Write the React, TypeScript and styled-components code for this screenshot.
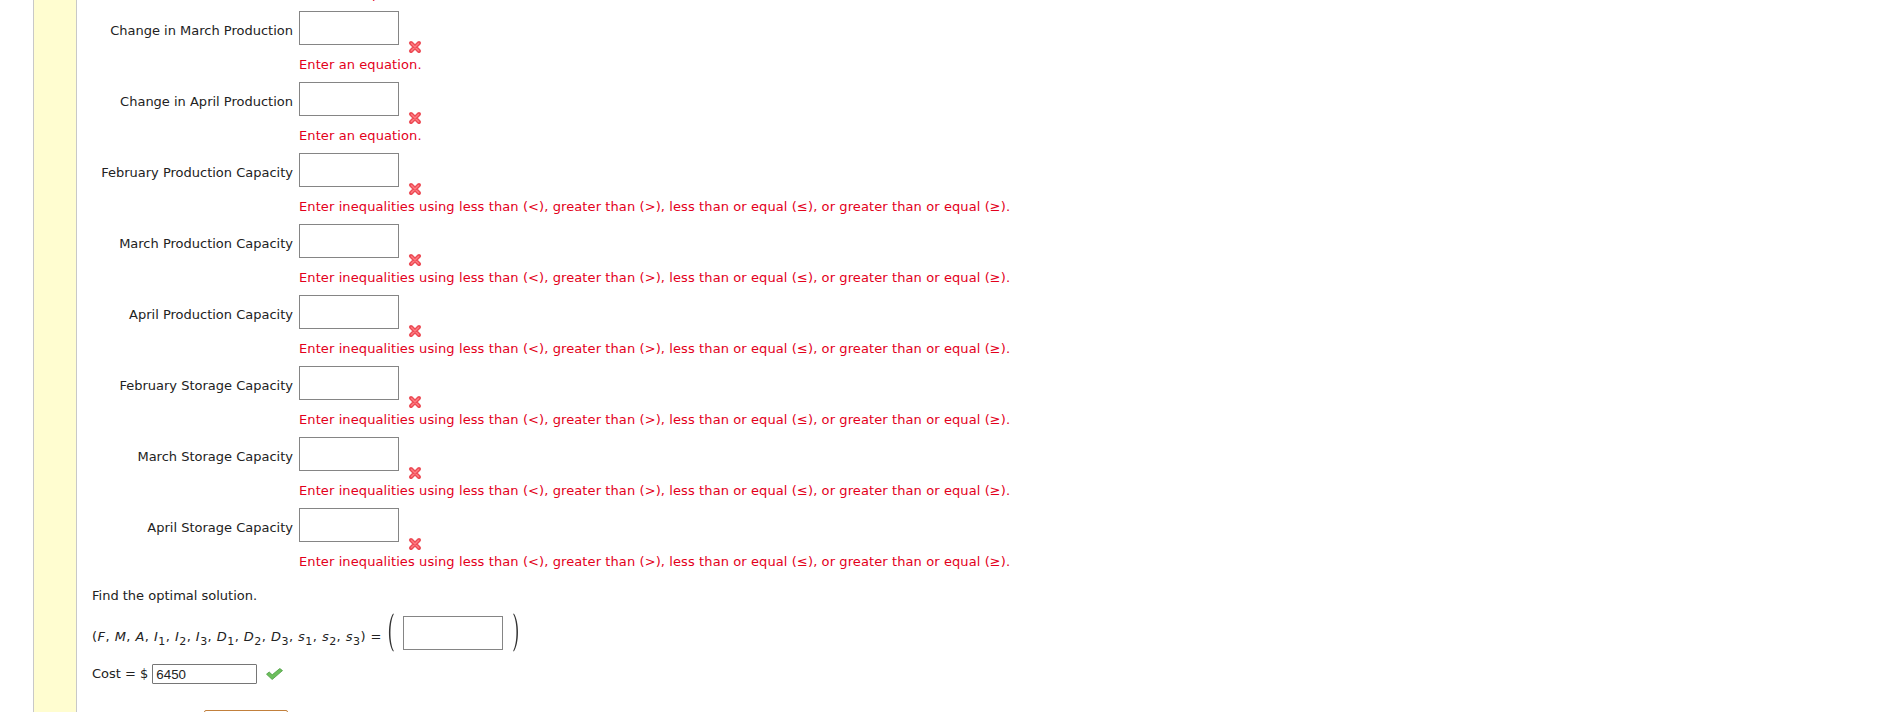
import React from "react";
import styled, { createGlobalStyle } from "styled-components";

const EQ = "Enter an equation.";
const INEQ =
  "Enter inequalities using less than (<), greater than (>), less than or equal (≤), or greater than or equal (≥).";

const rows = [
  { label: "Change in February Production", msg: EQ },
  { label: "Change in March Production", msg: EQ },
  { label: "Change in April Production", msg: EQ },
  { label: "February Production Capacity", msg: INEQ },
  { label: "March Production Capacity", msg: INEQ },
  { label: "April Production Capacity", msg: INEQ },
  { label: "February Storage Capacity", msg: INEQ },
  { label: "March Storage Capacity", msg: INEQ },
  { label: "April Storage Capacity", msg: INEQ },
];

const vars: [string, string?][] = [
  ["F"], ["M"], ["A"], ["I", "1"], ["I", "2"], ["I", "3"],
  ["D", "1"], ["D", "2"], ["D", "3"], ["s", "1"], ["s", "2"], ["s", "3"],
];

const GlobalStyle = createGlobalStyle`
  html, body {
    margin: 0;
    padding: 0;
    overflow: hidden;
    background: #fff;
  }
  body {
    font-family: "DejaVu Sans", Verdana, sans-serif;
    font-size: 13px;
    color: #222;
  }
`;

const Cross = () => (
  <svg width="14" height="14" viewBox="0 0 14 14">
    <path d="M3 3 L11 11 M11 3 L3 11" stroke="#ec4b55" strokeWidth="4" strokeLinecap="round" />
    <path d="M3.5 3.5 L10.5 10.5 M10.5 3.5 L3.5 10.5" stroke="#ff7c82" strokeWidth="1.4" strokeLinecap="round" />
  </svg>
);

const Check = () => (
  <svg width="17" height="12" viewBox="0 0 17 12">
    <path d="M0.5 6.2 L3.2 4 L6.2 6.8 L13.8 0.5 L16.5 2.6 L6.2 11.5 Z" fill="#6cbf5c" stroke="#4c9c43" strokeWidth="0.8" strokeLinejoin="round" />
  </svg>
);

// stretchy delimiters round the answer box
const Paren = ({ side }: { side: "left" | "right" }) => (
  <svg width="8" height="39" viewBox="0 0 8 39">
    {side === "left" ? (
      <path d="M7.2 0.5 C1.6 8 1.6 31 7.2 38.5 L7.8 38 C3.4 30 3.4 9 7.8 1 Z" fill="#333" />
    ) : (
      <path d="M0.8 0.5 C6.4 8 6.4 31 0.8 38.5 L0.2 38 C4.6 30 4.6 9 0.2 1 Z" fill="#333" />
    )}
  </svg>
);

const App = () => (
  <>
    <GlobalStyle />
    <Page>
      <Gutter />
      <Strip />
      <Content>
        {rows.map((r) => (
          <Row key={r.label}>
            <Label>{r.label}</Label>
            <Field>
              <InputLine>
                <AnswerBox />
                <Mark $top={29}>
                  <Cross />
                </Mark>
              </InputLine>
              <ErrorText>{r.msg}</ErrorText>
            </Field>
          </Row>
        ))}

        <Prompt>Find the optimal solution.</Prompt>

        <Formula>
          <MathText>
            (
            {vars.map(([v, s], i) => (
              <React.Fragment key={i}>
                <Var>{v}</Var>
                {s && <Sub>{s}</Sub>}
                {i < vars.length - 1 ? ", " : ""}
              </React.Fragment>
            ))}
            ) =
          </MathText>
          <ParenWrap $gap={4}>
            <Paren side="left" />
          </ParenWrap>
          <AnswerBox $gapLeft={9} />
          <ParenWrap $gap={10}>
            <Paren side="right" />
          </ParenWrap>
        </Formula>

        <CostLine>
          <span>Cost = $</span>
          <CostInput defaultValue="6450" />
          <Mark $top={0}>
            <Check />
          </Mark>
        </CostLine>

        <SubmitButton />
      </Content>
    </Page>
  </>
);

const Page = styled.div`
  display: flex;
  min-height: 100vh;
  width: 100%;
`;

const Gutter = styled.div`
  width: 33px;
  flex: none;
`;

const Strip = styled.div`
  width: 42px;
  flex: none;
  background: #fffdd0;
  border-left: 1px solid #c8c8c8;
  border-right: 1px solid #c8c8c8;
`;

const Content = styled.div`
  flex: 1;
  margin-top: -60px;
  padding-left: 15px;
  display: flex;
  flex-direction: column;
  align-items: flex-start;
`;

const Row = styled.div`
  display: flex;
  margin-bottom: 9px;
`;

const Label = styled.div`
  width: 201px;
  text-align: right;
  padding-top: 12px;
  line-height: 16px;
  margin-right: 6px;
  white-space: nowrap;
`;

const Field = styled.div`
  display: flex;
  flex-direction: column;
`;

const InputLine = styled.div`
  display: flex;
  align-items: flex-start;
  height: 46px;
`;

const AnswerBox = styled.div<{ $gapLeft?: number }>`
  width: 100px;
  height: 34px;
  box-sizing: border-box;
  border: 1px solid #858585;
  background: #fff;
  margin-left: ${(p) => p.$gapLeft ?? 0}px;
  flex: none;
`;

const Mark = styled.span<{ $top: number }>`
  display: inline-flex;
  margin-left: 9px;
  margin-top: ${(p) => p.$top}px;
`;

const ErrorText = styled.div`
  color: #e3001b;
  line-height: 16px;
  height: 16px;
  letter-spacing: 0.1px;
  white-space: nowrap;
`;

const Prompt = styled.div`
  line-height: 16px;
  margin-top: 9px;
`;

const Formula = styled.div`
  display: flex;
  align-items: center;
  margin-top: 9px;
  height: 39px;
`;

const MathText = styled.span`
  line-height: 16px;
  padding-top: 8px;
  letter-spacing: 0.45px;
  white-space: pre;
`;

const Var = styled.i`
  font-style: oblique;
`;

const Sub = styled.sub`
  font-size: 11px;
  vertical-align: -4px;
  line-height: 0;
`;

const ParenWrap = styled.span<{ $gap: number }>`
  display: inline-flex;
  margin-left: ${(p) => p.$gap}px;
`;

const CostLine = styled.div`
  display: flex;
  align-items: center;
  margin-top: 12px;
  line-height: 16px;
`;

const CostInput = styled.input`
  width: 105px;
  height: 20px;
  box-sizing: border-box;
  margin: 0 0 0 4px;
  padding: 1px 3px;
  border: 1px solid #767676;
  border-radius: 1px;
  font-family: "Liberation Sans", Arial, sans-serif;
  font-size: 13.33px;
  color: #222;
  outline: none;
`;

const SubmitButton = styled.div`
  margin-top: 26px;
  margin-left: 112px;
  width: 84px;
  height: 28px;
  box-sizing: border-box;
  border: 1px solid #c2803c;
  border-radius: 2px;
  background: #fff;
`;

export default App;
